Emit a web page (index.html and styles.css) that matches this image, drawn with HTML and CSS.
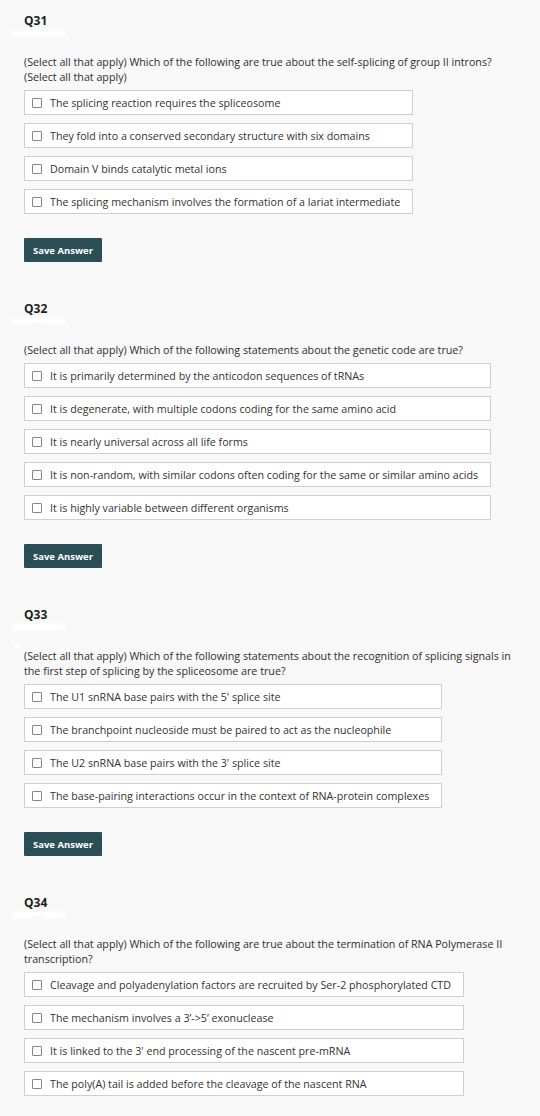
FILE: index.html
```html
<!DOCTYPE html>
<html lang="en">
<head>
<meta charset="utf-8">
<title>Quiz</title>
<link rel="stylesheet" href="styles.css">
</head>
<body>
<main class="quiz">
  <section class="question">
    <h3 class="q-title">Q31</h3>
    <div class="points"><span class="smudge"></span></div>
    <p class="q-text">(Select all that apply) Which of the following are true about the self-splicing of group II introns? (Select all that apply)</p>
    <div class="options">
      <label class="option"><span class="box"></span><span>The splicing reaction requires the spliceosome</span></label>
      <label class="option"><span class="box"></span><span>They fold into a conserved secondary structure with six domains</span></label>
      <label class="option"><span class="box"></span><span>Domain V binds catalytic metal ions</span></label>
      <label class="option"><span class="box"></span><span>The splicing mechanism involves the formation of a lariat intermediate</span></label>
    </div>
    <button class="save">Save Answer</button>
  </section>

  <section class="question">
    <h3 class="q-title">Q32</h3>
    <div class="points"><span class="smudge"></span><span class="faint">· ····</span></div>
    <p class="q-text">(Select all that apply) Which of the following statements about the genetic code are true?</p>
    <div class="options">
      <label class="option"><span class="box"></span><span>It is primarily determined by the anticodon sequences of tRNAs</span></label>
      <label class="option"><span class="box"></span><span>It is degenerate, with multiple codons coding for the same amino acid</span></label>
      <label class="option"><span class="box"></span><span>It is nearly universal across all life forms</span></label>
      <label class="option"><span class="box"></span><span>It is non-random, with similar codons often coding for the same or similar amino acids</span></label>
      <label class="option"><span class="box"></span><span>It is highly variable between different organisms</span></label>
    </div>
    <button class="save">Save Answer</button>
  </section>

  <section class="question">
    <h3 class="q-title">Q33</h3>
    <div class="points"><span class="smudge"></span><span class="dot"></span></div>
    <p class="q-text">(Select all that apply) Which of the following statements about the recognition of splicing signals in the first step of splicing by the spliceosome are true?</p>
    <div class="options">
      <label class="option"><span class="box"></span><span>The U1 snRNA base pairs with the 5' splice site</span></label>
      <label class="option"><span class="box"></span><span>The branchpoint nucleoside must be paired to act as the nucleophile</span></label>
      <label class="option"><span class="box"></span><span>The U2 snRNA base pairs with the 3' splice site</span></label>
      <label class="option"><span class="box"></span><span>The base-pairing interactions occur in the context of RNA-protein complexes</span></label>
    </div>
    <button class="save">Save Answer</button>
  </section>

  <section class="question">
    <h3 class="q-title">Q34</h3>
    <div class="points"><span class="smudge"></span><span class="faint">· ····</span></div>
    <p class="q-text">(Select all that apply) Which of the following are true about the termination of RNA Polymerase II transcription?</p>
    <div class="options">
      <label class="option"><span class="box"></span><span>Cleavage and polyadenylation factors are recruited by Ser-2 phosphorylated CTD</span></label>
      <label class="option"><span class="box"></span><span>The mechanism involves a 3’-&gt;5’ exonuclease</span></label>
      <label class="option"><span class="box"></span><span>It is linked to the 3' end processing of the nascent pre-mRNA</span></label>
      <label class="option"><span class="box"></span><span>The poly(A) tail is added before the cleavage of the nascent RNA</span></label>
    </div>
  </section>
</main>
</body>
</html>
```

FILE: styles.css
```css
html, body {
  margin: 0;
  padding: 0;
  background: #f8f8f8;
}
body {
  font-family: "Open Sans", "Noto Sans", sans-serif;
  color: #2d2d2d;
  font-size: 10.7px;
}
.quiz {
  padding: 13px 20px 0 24px;
}
.question {
  display: flex;
  flex-direction: column;
  align-items: flex-start;
  margin-bottom: 39px;
}
.q-title {
  margin: 0;
  font-size: 12px;
  font-weight: 700;
  line-height: 16px;
  color: #1f1f1f;
}
.points {
  height: 8px;
  margin-left: -12px;
  position: relative;
  width: 60px;
}
.smudge {
  display: block;
  width: 54px;
  height: 6px;
  margin-top: 1px;
  background: #fff;
  border-radius: 4px;
  filter: blur(1.5px);
}
.faint {
  position: absolute;
  left: 20px;
  top: 2px;
  font-size: 6px;
  color: #c8c8c8;
  letter-spacing: 0.5px;
}
.dot {
  position: absolute;
  left: 2px;
  top: 20px;
  width: 6px;
  height: 6px;
  border-radius: 50%;
  background: #fff;
  filter: blur(1px);
}
.q-text {
  margin: 18px 0 5px;
  line-height: 15px;
  font-size: 10.7px;
  color: #2e2e2e;
}
.options {
  display: flex;
  flex-direction: column;
  gap: 8px;
  width: fit-content;
}
.option {
  display: flex;
  align-items: center;
  gap: 8px;
  height: 25px;
  box-sizing: border-box;
  padding: 0 12px 0 7px;
  background: #fff;
  border: 1px solid #cfcfcf;
  color: #333;
  white-space: nowrap;
}
.box {
  width: 10px;
  height: 10px;
  box-sizing: border-box;
  border: 1px solid #858585;
  border-radius: 1px;
  background: #fff;
  flex: none;
}
.save {
  margin-top: 24px;
  width: 78px;
  height: 24px;
  padding: 0;
  border: none;
  border-radius: 1px;
  background: #2c4e57;
  color: #fff;
  font-family: "Open Sans", "Noto Sans", sans-serif;
  font-weight: 700;
  font-size: 9.5px;
}
```
